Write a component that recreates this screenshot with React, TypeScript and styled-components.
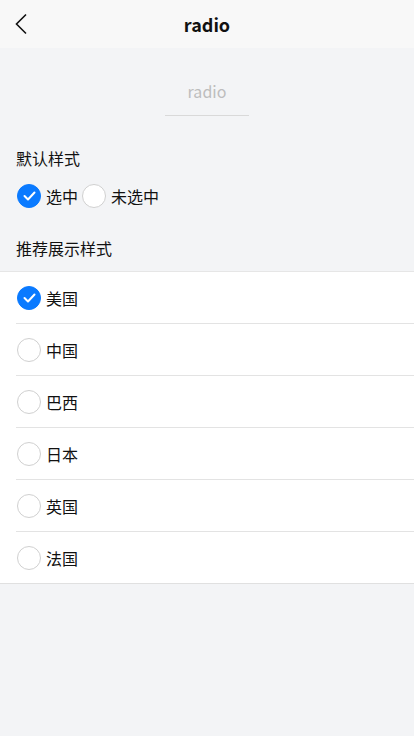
import { useState } from "react";
import styled, { createGlobalStyle } from "styled-components";

const GlobalStyle = createGlobalStyle`
  body {
    margin: 0;
    background: #f3f4f6;
    font-family: "Noto Sans CJK SC", "Noto Sans", sans-serif;
    color: #111;
  }
`;

const Page = styled.div`
  min-height: 736px;
  background: #f3f4f6;
`;

const NavBar = styled.header`
  height: 48px;
  display: flex;
  align-items: center;
  justify-content: center;
  position: relative;
  background: #f8f8f8;
`;

const BackButton = styled.button`
  position: absolute;
  left: 9px;
  top: 10px;
  width: 24px;
  height: 28px;
  padding: 0;
  border: none;
  background: none;
  display: flex;
  align-items: center;
  justify-content: center;
`;

const Title = styled.h1`
  margin: 0;
  font-size: 18px;
  font-weight: 700;
`;

const InputWrap = styled.div`
  display: flex;
  justify-content: center;
  padding-top: 25px;
`;

const TextInput = styled.input`
  width: 84px;
  height: 43px;
  box-sizing: border-box;
  border: none;
  border-bottom: 1px solid #d9d9d9;
  background: transparent;
  text-align: center;
  font-size: 16px;
  font-family: inherit;
  outline: none;
  padding: 0 0 6px;
  &::placeholder {
    color: #bdbdbd;
  }
`;

const SectionTitle = styled.div<{ $top: number }>`
  margin-top: ${(p) => p.$top}px;
  padding-left: 16px;
  font-size: 16px;
  line-height: 24px;
`;

const InlineGroup = styled.div`
  display: flex;
  align-items: center;
  gap: 4px;
  margin-top: 14px;
  padding-left: 17px;
`;

const Option = styled.label`
  display: flex;
  align-items: center;
  gap: 5px;
  font-size: 16px;
  line-height: 24px;
  cursor: pointer;
`;

const Circle = styled.span<{ $checked: boolean }>`
  width: 24px;
  height: 24px;
  box-sizing: border-box;
  border-radius: 50%;
  display: flex;
  align-items: center;
  justify-content: center;
  background: ${(p) => (p.$checked ? "#0a7aff" : "#fff")};
  border: 1px solid ${(p) => (p.$checked ? "#0a7aff" : "#d0d0d0")};
`;

const List = styled.ul`
  list-style: none;
  margin: 11px 0 0;
  padding: 0 0 0 16px;
  background: #fff;
  border-top: 1px solid #e6e6e6;
  border-bottom: 1px solid #e0e0e0;
`;

const Row = styled.li<{ $last: boolean }>`
  height: 51px;
  display: flex;
  align-items: center;
  padding-left: 1px;
  border-bottom: ${(p) => (p.$last ? "none" : "1px solid #e3e3e3")};
`;

const Check = () => (
  <svg width="13" height="10" viewBox="0 0 13 10">
    <path d="M1.5 5 L5 8.5 L11.5 1.5" fill="none" stroke="#fff" strokeWidth="2" strokeLinecap="round" strokeLinejoin="round" />
  </svg>
);

const Radio = ({ checked, label, onSelect }: { checked: boolean; label: string; onSelect: () => void }) => (
  <Option onClick={onSelect}>
    <Circle $checked={checked}>{checked && <Check />}</Circle>
    {label}
  </Option>
);

const countries = ["美国", "中国", "巴西", "日本", "英国", "法国"];

export default function App() {
  const [basic, setBasic] = useState("选中");
  const [country, setCountry] = useState("美国");

  return (
    <Page>
      <GlobalStyle />
      <NavBar>
        <BackButton aria-label="back">
          <svg width="14" height="22" viewBox="0 0 14 22">
            <path d="M12 1.5 L2.5 11 L12 20.5" fill="none" stroke="#111" strokeWidth="1.6" />
          </svg>
        </BackButton>
        <Title>radio</Title>
      </NavBar>

      <InputWrap>
        <TextInput placeholder="radio" />
      </InputWrap>

      <SectionTitle $top={30}>默认样式</SectionTitle>
      <InlineGroup>
        {["选中", "未选中"].map((l) => (
          <Radio key={l} label={l} checked={basic === l} onSelect={() => setBasic(l)} />
        ))}
      </InlineGroup>

      <SectionTitle $top={28}>推荐展示样式</SectionTitle>
      <List>
        {countries.map((c, i) => (
          <Row key={c} $last={i === countries.length - 1}>
            <Radio label={c} checked={country === c} onSelect={() => setCountry(c)} />
          </Row>
        ))}
      </List>
    </Page>
  );
}
